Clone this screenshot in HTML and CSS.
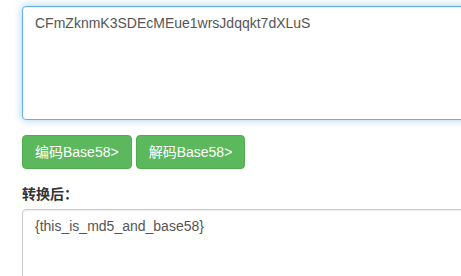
FILE: index.html
```html
<!DOCTYPE html>
<html lang="zh-CN">
<head>
<meta charset="utf-8">
<title>Base58</title>
<link rel="stylesheet" href="styles.css">
</head>
<body>
<div class="page">
  <textarea class="box box-focus" rows="5">CFmZknmK3SDEcMEue1wrsJdqqkt7dXLuS</textarea>
  <div class="actions">
    <button class="btn">编码Base58&gt;</button>
    <button class="btn">解码Base58&gt;</button>
  </div>
  <label class="label">转换后：</label>
  <textarea class="box" rows="5">{this_is_md5_and_base58}</textarea>
</div>
</body>
</html>
```
FILE: styles.css
```css
html, body {
  margin: 0;
  padding: 0;
  background: #fff;
  overflow: hidden;
}
.page {
  padding: 6px 0 0 22px;
  font-family: "Liberation Sans", Arial, "Noto Sans CJK SC", sans-serif;
  font-size: 14px;
  line-height: 20px;
  color: #333;
  width: 700px;
}
.box {
  display: block;
  box-sizing: border-box;
  width: 600px;
  height: 114px;
  margin: 0;
  padding: 6px 12px;
  font-family: inherit;
  font-size: 14px;
  line-height: 20px;
  color: #555;
  background: #fff;
  border: 1px solid #ccc;
  border-radius: 4px;
  box-shadow: inset 0 1px 1px rgba(0,0,0,.075);
  resize: none;
  outline: none;
}
.box-focus {
  border-color: #66afe9;
  box-shadow: inset 0 1px 1px rgba(0,0,0,.075), 0 0 8px rgba(102,175,233,.6);
}
.actions {
  display: flex;
  gap: 4px;
  margin-top: 15px;
}
.btn {
  box-sizing: border-box;
  height: 34px;
  padding: 6px 12px;
  font-family: inherit;
  font-size: 14px;
  line-height: 20px;
  color: #fff;
  background: #5cb85c;
  border: 1px solid #4cae4c;
  border-radius: 4px;
  cursor: pointer;
}
.label {
  display: block;
  margin: 15px 0 5px;
  font-weight: bold;
  color: #333;
}
```
